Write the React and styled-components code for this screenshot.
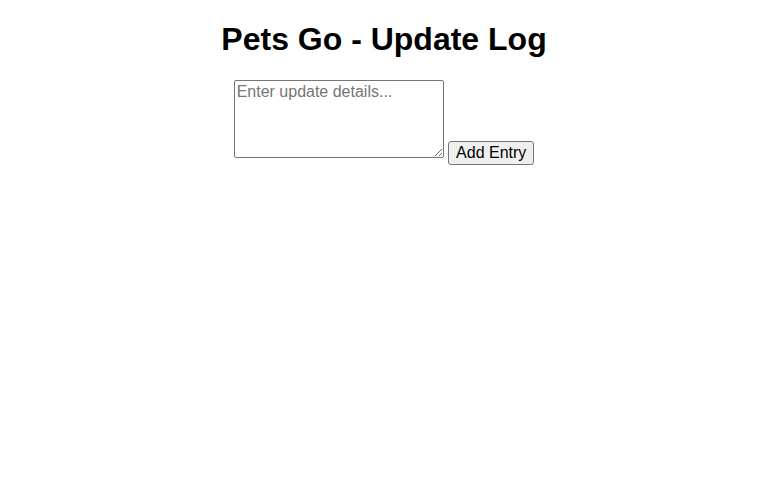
import React, { useState } from "react";
import styled, { createGlobalStyle } from "styled-components";

const GlobalStyle = createGlobalStyle`
  body {
    margin: 0;
    background: #ffffff;
    font-family: "Liberation Sans", Arial, sans-serif;
    color: #000000;
  }
`;

const Page = styled.main`
  text-align: center;
`;

const Title = styled.h1`
  font-size: 32px;
  font-weight: bold;
  margin: 21.44px 0;
`;

const EntryForm = styled.form`
  font-size: 16px;
  text-align: center;
`;

const DetailsInput = styled.textarea`
  box-sizing: border-box;
  width: 210px;
  height: 78px;
  padding: 2px;
  border: 1px solid #767676;
  border-radius: 2px;
  font-family: "Liberation Sans", Arial, sans-serif;
  font-size: 16px;
  color: #000;
  vertical-align: baseline;

  &::placeholder {
    color: #757575;
  }
`;

const AddButton = styled.button`
  font-family: "Liberation Sans", Arial, sans-serif;
  font-size: 16px;
  padding: 2px 7px;
  border: 1px solid #767676;
  border-radius: 3px;
  background: #efefef;
  color: #000;
`;

export default function App() {
  const [text, setText] = useState("");
  const [entries, setEntries] = useState([]);

  const onSubmit = (e) => {
    e.preventDefault();
    if (!text.trim()) return;
    setEntries([...entries, text.trim()]);
    setText("");
  };

  return (
    <>
      <GlobalStyle />
      <Page>
        <Title>Pets Go - Update Log</Title>
        <EntryForm onSubmit={onSubmit}>
          <DetailsInput
            placeholder="Enter update details..."
            value={text}
            onChange={(e) => setText(e.target.value)}
          />{" "}
          <AddButton type="submit">Add Entry</AddButton>
        </EntryForm>
        {entries.map((entry, i) => (
          <p key={i}>{entry}</p>
        ))}
      </Page>
    </>
  );
}
